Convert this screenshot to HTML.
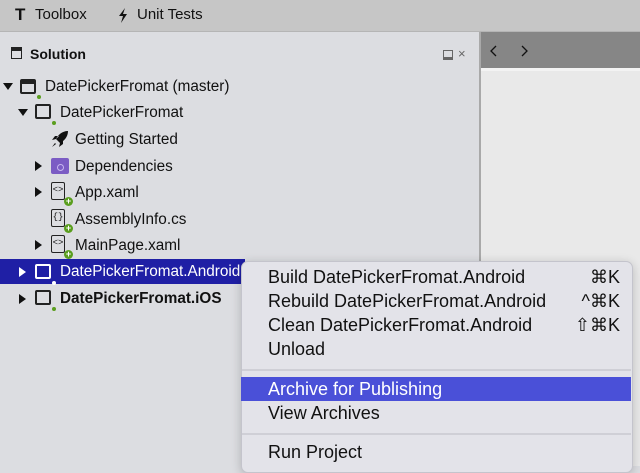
<!DOCTYPE html>
<html><head><style>
body{margin:0;width:640px;height:463px;overflow:hidden;background:#dcdde1;font-family:"Liberation Sans",sans-serif;position:relative}
.abs{position:absolute}
.t{position:absolute;font-size:15.3px;color:#111;white-space:nowrap}
.tri{position:absolute;width:0;height:0}
.right{border-top:5px solid transparent;border-bottom:5px solid transparent;border-left:7px solid #111}
.down{border-left:5px solid transparent;border-right:5px solid transparent;border-top:7px solid #111}
.box{position:absolute;width:16px;height:15px;border:2px solid #222;border-radius:2px;box-sizing:border-box}
.file{position:absolute;width:14px;height:18px;border:1.5px solid #222;border-radius:2px;box-sizing:border-box;font-size:9px;text-align:center;line-height:14px;font-family:"Liberation Mono",monospace;color:#111}
.plus{position:absolute;width:9px;height:9px;border-radius:50%;background:#5a9e1e;color:#fff;font-size:9px;line-height:9px;text-align:center;font-weight:bold}
.dot{position:absolute;width:4px;height:4px;border-radius:50%;background:#5a9e1e}
.mi{position:absolute;left:268px;font-size:18px;color:#111;white-space:nowrap}
.sc{position:absolute;right:20px;font-size:18px;color:#111}
</style></head><body>
<div class="abs" style="left:0;top:0;width:640px;height:31px;background:#c6c6c6;border-bottom:1px solid #b5b5b5"></div>
<div class="t" style="left:15px;top:5px;font-size:17px;font-weight:bold">T</div>
<div class="t" style="left:35px;top:6px;font-size:15px">Toolbox</div>
<svg class="abs" style="left:117px;top:8px" width="12" height="15"><path d="M8 0 L2 8 H6 L4 15 L10 6 H6 Z" fill="#111"/></svg>
<div class="t" style="left:137px;top:6px;font-size:15px">Unit Tests</div>

<div class="abs" style="left:479px;top:32px;width:2px;height:431px;background:#a9a9a9"></div>
<div class="abs" style="left:481px;top:32px;width:159px;height:36px;background:#868686"></div>
<div class="abs" style="left:481px;top:68px;width:159px;height:395px;background:#e9e9e9;border-top:3px solid #f3f3f3"></div>
<svg class="abs" style="left:488px;top:44px" width="50" height="14"><path d="M8 2 L3 7 L8 12 M34 2 L39 7 L34 12" stroke="#111" stroke-width="1.3" fill="none"/></svg>

<div class="abs" style="left:11px;top:47px;width:11px;height:12px;border:1.5px solid #222;box-sizing:border-box;border-top-width:4px"></div>
<div class="t" style="left:30px;top:46px;font-weight:bold;font-size:14px">Solution</div>
<div class="abs" style="left:443px;top:50px;width:10px;height:10px;border:1.5px solid #666;box-sizing:border-box;border-bottom-width:3px"></div>
<div class="t" style="left:458px;top:46px;color:#666;font-size:13px">×</div>

<div class="tri down" style="left:3px;top:83px"></div>
<div class="box" style="left:20px;top:79px;border-top-width:5px"></div><div class="dot" style="left:37px;top:95px"></div>
<div class="t" style="left:45px;top:78px">DatePickerFromat (master)</div>

<div class="tri down" style="left:18px;top:109px"></div>
<div class="box" style="left:35px;top:104px"></div><div class="dot" style="left:52px;top:121px"></div>
<div class="t" style="left:60px;top:104px">DatePickerFromat</div>

<svg class="abs" style="left:51px;top:130px" width="18" height="18"><path d="M17 1 C11 1 7 5 5 9 L9 13 C13 11 17 7 17 1 Z M5 9 L1 10 L4 6 L8 6 Z M9 13 L8 17 L12 14 L12 10 Z M4 13 L1 17 L5 14 Z" fill="#111"/></svg>
<div class="t" style="left:75px;top:131px">Getting Started</div>

<div class="tri right" style="left:35px;top:161px"></div>
<div class="abs" style="left:51px;top:158px;width:18px;height:16px;background:#7b5cc4;border-radius:2px"></div>
<div class="abs" style="left:57px;top:164px;width:5px;height:5px;border:1px solid #c8b8f0;border-radius:50%"></div>
<div class="t" style="left:75px;top:158px">Dependencies</div>

<div class="tri right" style="left:35px;top:187px"></div>
<div class="file" style="left:51px;top:182px">&lt;&gt;</div><div class="plus" style="left:64px;top:197px">+</div>
<div class="t" style="left:75px;top:184px">App.xaml</div>

<div class="file" style="left:51px;top:209px">{}</div><div class="plus" style="left:64px;top:224px">+</div>
<div class="t" style="left:75px;top:211px">AssemblyInfo.cs</div>

<div class="tri right" style="left:35px;top:240px"></div>
<div class="file" style="left:51px;top:235px">&lt;&gt;</div><div class="plus" style="left:64px;top:250px">+</div>
<div class="t" style="left:75px;top:237px">MainPage.xaml</div>

<div class="abs" style="left:0;top:259px;width:245px;height:25px;background:#1f1fa5"></div>
<div class="tri right" style="left:19px;top:267px;border-left-color:#fff"></div>
<div class="box" style="left:35px;top:264px;border-color:#fff"></div><div class="dot" style="left:52px;top:281px;background:#fff"></div>
<div class="t" style="left:60px;top:263px;color:#fff">DatePickerFromat.Android</div>

<div class="tri right" style="left:19px;top:294px"></div>
<div class="box" style="left:35px;top:290px"></div><div class="dot" style="left:52px;top:307px"></div>
<div class="t" style="left:60px;top:290px;font-weight:bold">DatePickerFromat.iOS</div>

<div class="abs" style="left:241px;top:261px;width:390px;height:210px;background:#e3e3e9;border:1px solid #c4c4cc;border-radius:7px;box-shadow:0 2px 10px rgba(0,0,0,.2)"></div>
<div class="mi" style="top:267px">Build DatePickerFromat.Android</div><div class="sc" style="top:267px">⌘K</div>
<div class="mi" style="top:291px">Rebuild DatePickerFromat.Android</div><div class="sc" style="top:291px">^⌘K</div>
<div class="mi" style="top:315px">Clean DatePickerFromat.Android</div><div class="sc" style="top:315px">⇧⌘K</div>
<div class="mi" style="top:339px">Unload</div>
<div class="abs" style="left:242px;top:369px;width:389px;height:2px;background:#cfcfd6"></div>
<div class="abs" style="left:241px;top:377px;width:390px;height:24px;background:#4a50d8"></div>
<div class="mi" style="top:379px;color:#fff">Archive for Publishing</div>
<div class="mi" style="top:403px">View Archives</div>
<div class="abs" style="left:242px;top:433px;width:389px;height:2px;background:#cfcfd6"></div>
<div class="mi" style="top:442px">Run Project</div>
</body></html>
